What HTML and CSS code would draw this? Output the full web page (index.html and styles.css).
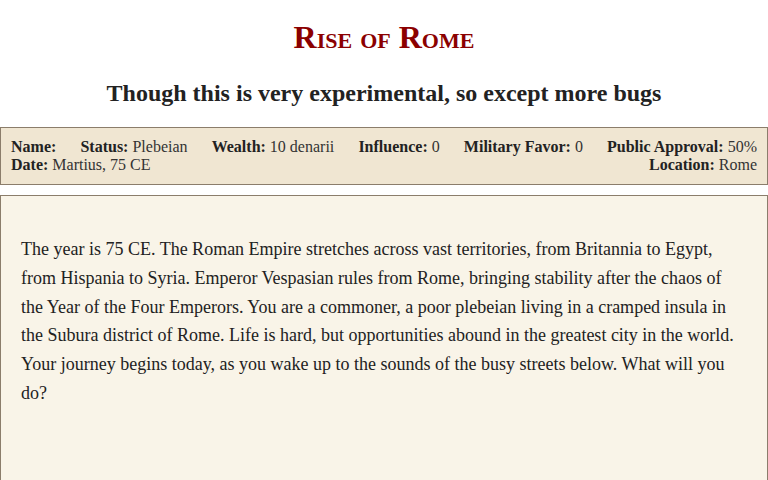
FILE: index.html
```html
<!DOCTYPE html>
<html lang="en">
<head>
<meta charset="utf-8">
<title>Rise of Rome</title>
<link rel="stylesheet" href="styles.css">
</head>
<body>
<h1 class="title">Rise of Rome</h1>
<h2 class="subtitle">Though this is very experimental, so except more bugs</h2>
<div class="status-bar">
  <div class="stat"><b>Name:</b> <span></span></div>
  <div class="stat"><b>Status:</b> Plebeian</div>
  <div class="stat"><b>Wealth:</b> 10 denarii</div>
  <div class="stat"><b>Influence:</b> 0</div>
  <div class="stat"><b>Military Favor:</b> 0</div>
  <div class="stat"><b>Public Approval:</b> 50%</div>
  <div class="stat"><b>Date:</b> Martius, 75 CE</div>
  <div class="stat"><b>Location:</b> Rome</div>
</div>
<div class="story">
  <p class="story-text">The year is 75 CE. The Roman Empire stretches across vast territories, from Britannia to Egypt, from Hispania to Syria. Emperor Vespasian rules from Rome, bringing stability after the chaos of the Year of the Four Emperors. You are a commoner, a poor plebeian living in a cramped insula in the Subura district of Rome. Life is hard, but opportunities abound in the greatest city in the world. Your journey begins today, as you wake up to the sounds of the busy streets below. What will you do?</p>
</div>
</body>
</html>
```
FILE: styles.css
```css
html, body {
  margin: 0;
  padding: 0;
  background: #ffffff;
  font-family: "Liberation Serif", "Times New Roman", serif;
  color: #222222;
}
.title {
  margin: 19px 0 0;
  text-align: center;
  font-size: 32px;
  font-weight: bold;
  font-variant: small-caps;
  color: #8b0000;
}
.subtitle {
  margin: 24px 0 20px;
  text-align: center;
  font-size: 24px;
  font-weight: bold;
  color: #222222;
}
.status-bar {
  display: flex;
  flex-wrap: wrap;
  justify-content: space-between;
  column-gap: 12px;
  padding: 10px;
  background: #f0e6d2;
  border: 1px solid #8b7d6b;
  font-size: 16px;
  line-height: 18px;
  color: #333333;
}
.status-bar b {
  color: #222222;
}
.story {
  margin-top: 10px;
  padding: 39px 20px 80px;
  background: #f9f4e8;
  border: 1px solid #8b7d6b;
  min-height: 300px;
}
.story-text {
  margin: 0;
  font-size: 18px;
  line-height: 1.6;
  color: #222222;
}
```
